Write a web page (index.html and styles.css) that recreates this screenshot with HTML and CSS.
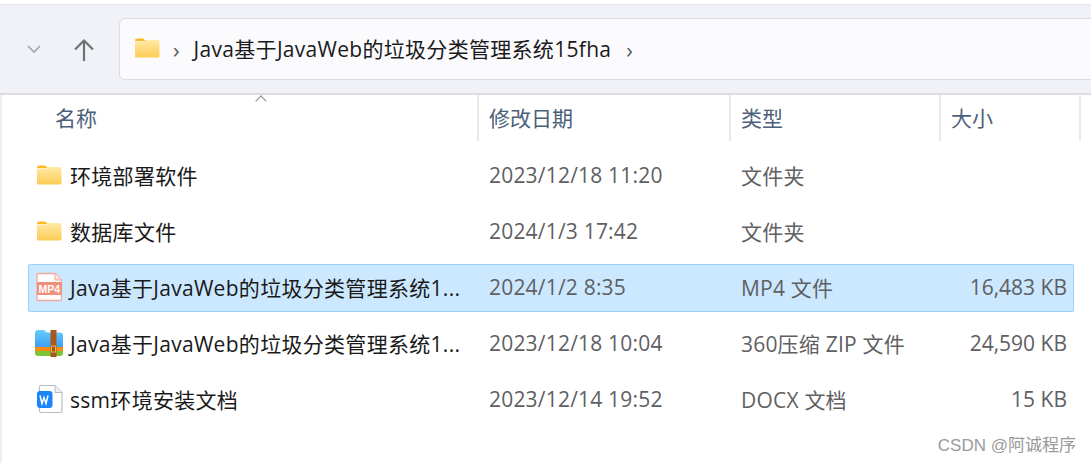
FILE: index.html
```html
<!DOCTYPE html>
<html lang="zh-CN">
<head>
    <meta charset="UTF-8">
    <title>Java基于JavaWeb的垃圾分类管理系统15fha</title>
    <link rel="stylesheet" href="styles.css">
</head>
<body>
    <div class="toolbar">
        <svg class="nav-down" width="16" height="10" viewBox="0 0 16 10"><path d="M2 2l6 6 6-6" fill="none" stroke="#a3a5a9" stroke-width="1.6"/></svg>
        <svg class="nav-up" width="22" height="24" viewBox="0 0 22 24"><path d="M11 23V3M2 11.500L11 2.500l9 9" fill="none" stroke="#6f7175" stroke-width="2.200"/></svg>
        <div class="address">
            <svg class="folder" width="26" height="22" viewBox="0 0 26 22"><use href="#folder-icon"/></svg>
            <span class="chevron">›</span>
            <span class="crumb">Java基于JavaWeb的垃圾分类管理系统15fha</span>
            <span class="chevron last">›</span>
        </div>
    </div>

    <svg width="0" height="0" class="defs">
        <defs>
            <linearGradient id="folder-fill" x1="0" y1="0" x2="0" y2="1">
                <stop offset="0" stop-color="#ffeaa6"/>
                <stop offset="1" stop-color="#fdcb55"/>
            </linearGradient>
            <linearGradient id="zip-fill" x1="0" y1="0" x2="0" y2="1">
                <stop offset="0" stop-color="#6accfb"/>
                <stop offset="1" stop-color="#3a9cf3"/>
            </linearGradient>
            <symbol id="folder-icon" viewBox="0 0 26 22">
                <path d="M1 3.500Q1 1.500 3 1.500H9L12 4H1Z" fill="#fbb91f"/>
                <path d="M1 4.500H9.500L12 3H24Q25.500 3 25.500 4.500V19.500Q25.500 20.500 24 20.500H2Q1 20.500 1 19.500Z" fill="url(#folder-fill)"/>
            </symbol>
        </defs>
    </svg>

    <div class="list">
        <span class="sort-mark"></span>
        <div class="list-head">
            <div class="head-cell name-head">名称</div>
            <div class="head-cell">修改日期</div>
            <div class="head-cell">类型</div>
            <div class="head-cell">大小</div>
        </div>

        <div class="row">
            <div class="name-cell">
                <svg width="26" height="22" viewBox="0 0 26 22"><use href="#folder-icon"/></svg>
                <span>环境部署软件</span>
            </div>
            <div>2023/12/18 11:20</div>
            <div>文件夹</div>
            <div class="size"></div>
        </div>
        <div class="row">
            <div class="name-cell">
                <svg width="26" height="22" viewBox="0 0 26 22"><use href="#folder-icon"/></svg>
                <span>数据库文件</span>
            </div>
            <div>2024/1/3 17:42</div>
            <div>文件夹</div>
            <div class="size"></div>
        </div>
        <div class="row selected">
            <div class="name-cell">
                <svg width="28" height="30" viewBox="0 0 28 30">
                    <path d="M3.500 1.500H20L26.500 8V27Q26.500 28.500 25 28.500H3.500Q2 28.500 2 27V3Q2 1.500 3.500 1.500Z" fill="#fff" stroke="#f0a99b" stroke-width="1.300"/>
                    <path d="M20 1.500V8H26.500" fill="#fbe3de" stroke="#f0a99b"/>
                    <rect x="2" y="10" width="24.500" height="13" fill="#ef8f7c"/>
                    <text class="mp4-tag" x="14.200" y="20.500" text-anchor="middle">MP4</text>
                </svg>
                <span>Java基于JavaWeb的垃圾分类管理系统1...</span>
            </div>
            <div>2024/1/2 8:35</div>
            <div>MP4 文件</div>
            <div class="size">16,483 KB</div>
        </div>
        <div class="row">
            <div class="name-cell">
                <svg width="28" height="30" viewBox="0 0 28 30">
                    <path d="M0 5Q0 2 3 2H9L12 4.500H25Q28 4.500 28 7.500V20H0Z" fill="url(#zip-fill)"/>
                    <rect x="0" y="19" width="28" height="4.500" fill="#fb8a12"/>
                    <path d="M0 23H28V25Q28 28 25 28H3Q0 28 0 25Z" fill="#7cc335"/>
                    <rect x="15.500" y="2" width="6" height="27" fill="#a9581b"/>
                    <rect x="16.500" y="18" width="4" height="6" fill="none" stroke="#eab04e"/>
                </svg>
                <span>Java基于JavaWeb的垃圾分类管理系统1...</span>
            </div>
            <div>2023/12/18 10:04</div>
            <div>360压缩 ZIP 文件</div>
            <div class="size">24,590 KB</div>
        </div>
        <div class="row">
            <div class="name-cell">
                <svg width="28" height="30" viewBox="0 0 28 30">
                    <path d="M6 1.500H20L27 8.500V27Q27 28.500 25.500 28.500H6Q4.500 28.500 4.500 27V3Q4.500 1.500 6 1.500Z" fill="#fff" stroke="#b9bcc4" stroke-width="1.200"/>
                    <path d="M20 1.500V8.500H27" fill="#eef0f3" stroke="#b9bcc4"/>
                    <rect x="2" y="7" width="15.500" height="17" rx="3" fill="#1a85fb"/>
                    <path d="M5 11.500l2 8 2-6 2 6 2-8" fill="none" stroke="#fff" stroke-width="1.500"/>
                </svg>
                <span>ssm环境安装文档</span>
            </div>
            <div>2023/12/14 19:52</div>
            <div>DOCX 文档</div>
            <div class="size">15 KB</div>
        </div>
    </div>

    <div class="watermark">CSDN @阿诚程序</div>
</body>
</html>
```

FILE: styles.css
```css
* {
    box-sizing: border-box;
}

html,
body {
    height: 100%;
}

body {
    margin: 0;
    overflow: hidden;
    position: relative;
    background: #fff;
    padding-top: 4px;
    font-family: "Open Sans", "Noto Sans CJK SC", sans-serif;
    font-size: 21px;
    color: #5f6063;
}

.defs {
    position: absolute;
}

.toolbar {
    height: 91px;
    display: flex;
    align-items: center;
    background: #f0f2f7;
    border-top: 1px solid #e4e5e8;
    border-bottom: 2px solid #dcdde2;
    padding: 0 0 2px 26px;
}

.nav-down {
    margin-top: 2px;
}

.nav-up {
    margin-left: 31px;
    margin-top: 4px;
}

.address {
    flex: 1;
    height: 62px;
    margin-left: 24px;
    margin-right: -4px;
    margin-top: 1px;
    display: flex;
    align-items: center;
    background: #fbfbfe;
    border: 1px solid #dbdce0;
    border-radius: 6px;
    padding-left: 14px;
    color: #1a1a1a;
}

.folder {
    margin-bottom: 2px;
}

.chevron {
    margin: 0 14px 0 13px;
    color: #555;
    font-size: 22px;
    line-height: 1;
}

.chevron.last {
    margin-left: 15px;
}

.crumb {
    white-space: nowrap;
    letter-spacing: 0.3px;
    margin-bottom: 2px;
}

.list {
    position: relative;
    height: 368px;
    border-left: 2px solid #eeeff1;
}

.sort-mark {
    position: absolute;
    left: 255px;
    top: 2px;
    width: 8px;
    height: 8px;
    border-left: 1px solid #8a8a8a;
    border-top: 1px solid #8a8a8a;
    transform: rotate(45deg);
}

.list-head {
    display: grid;
    grid-template-columns: 477px 252px 210px 140px;
    height: 46px;
    color: #4c607a;
    margin-bottom: 11px;
}

.head-cell {
    display: flex;
    align-items: center;
    padding: 0 0 2px 10px;
    border-right: 2px solid #e8e9eb;
}

.name-head {
    padding-left: 53px;
}

.row {
    display: grid;
    grid-template-columns: 450px 252px 210px 127px;
    align-items: center;
    height: 48px;
    margin: 0 17px 8px 26px;
    padding-bottom: 2px;
    border: 1px solid transparent;
    border-radius: 2px;
    white-space: nowrap;
    letter-spacing: 0.2px;
}

.row > div {
    padding-left: 10px;
}

.row.selected {
    background: #cce8ff;
    border-color: #99d1ff;
}

.name-cell {
    display: flex;
    align-items: center;
    gap: 7px;
    color: #1a1a1a;
    letter-spacing: 0.3px;
    padding-left: 6px !important;
}

.name-cell svg {
    flex: none;
    width: 28px;
}

.mp4-tag {
    fill: #fff;
    font-family: "Liberation Sans", sans-serif;
    font-size: 10.500px;
    font-weight: bold;
    letter-spacing: 0;
}

.size {
    text-align: right;
    padding-right: 1px;
    letter-spacing: 0;
}

.watermark {
    position: absolute;
    right: 15px;
    bottom: 7px;
    color: #9a9a9a;
    font-family: "Liberation Sans", "Noto Sans CJK SC", sans-serif;
    font-size: 17px;
}
```
